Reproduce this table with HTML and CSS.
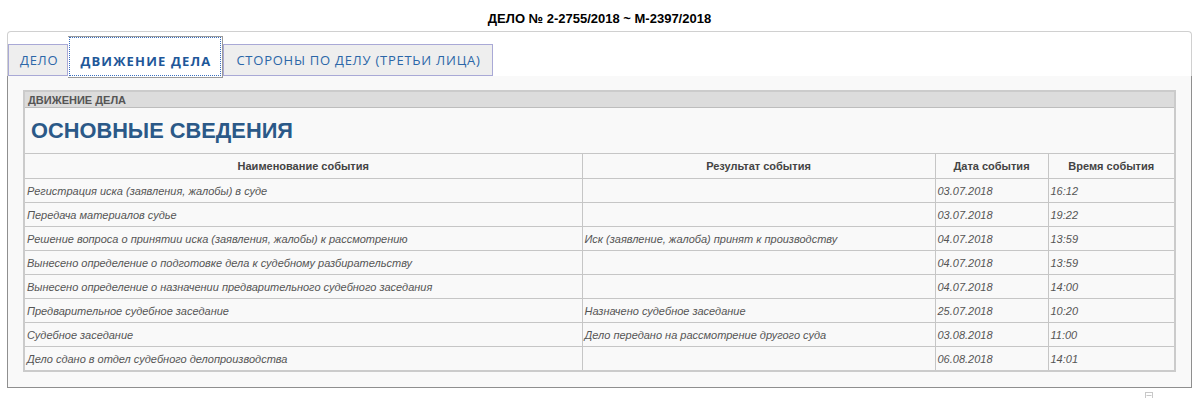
FILE: index.html
```html
<!DOCTYPE html>
<html lang="ru">
<head>
<meta charset="utf-8">
<title>Дело № 2-2755/2018</title>
<link rel="stylesheet" href="styles.css">
</head>
<body>
<div class="page">
  <h1 class="case-title">ДЕЛО № 2-2755/2018 ~ М-2397/2018</h1>
  <div class="tabs-box">
    <div class="tabs">
      <div class="tab tab-first">ДЕЛО</div>
      <div class="tab tab-active"><span class="focus">ДВИЖЕНИЕ ДЕЛА</span></div>
      <div class="tab">СТОРОНЫ ПО ДЕЛУ (ТРЕТЬИ ЛИЦА)</div>
    </div>
    <div class="panel">
      <table class="events">
        <colgroup>
          <col class="c1"><col class="c2"><col class="c3"><col class="c4">
        </colgroup>
        <tr class="sec"><td colspan="4">ДВИЖЕНИЕ ДЕЛА</td></tr>
        <tr class="big"><td colspan="4">ОСНОВНЫЕ СВЕДЕНИЯ</td></tr>
        <tr class="head">
          <th>Наименование события</th>
          <th>Результат события</th>
          <th>Дата события</th>
          <th>Время события</th>
        </tr>
        <tr><td>Регистрация иска (заявления, жалобы) в суде</td><td></td><td>03.07.2018</td><td>16:12</td></tr>
        <tr><td>Передача материалов судье</td><td></td><td>03.07.2018</td><td>19:22</td></tr>
        <tr><td>Решение вопроса о принятии иска (заявления, жалобы) к рассмотрению</td><td>Иск (заявление, жалоба) принят к производству</td><td>04.07.2018</td><td>13:59</td></tr>
        <tr><td>Вынесено определение о подготовке дела к судебному разбирательству</td><td></td><td>04.07.2018</td><td>13:59</td></tr>
        <tr><td>Вынесено определение о назначении предварительного судебного заседания</td><td></td><td>04.07.2018</td><td>14:00</td></tr>
        <tr><td>Предварительное судебное заседание</td><td>Назначено судебное заседание</td><td>25.07.2018</td><td>10:20</td></tr>
        <tr><td>Судебное заседание</td><td>Дело передано на рассмотрение другого суда</td><td>03.08.2018</td><td>11:00</td></tr>
        <tr><td>Дело сдано в отдел судебного делопроизводства</td><td></td><td>06.08.2018</td><td>14:01</td></tr>
      </table>
    </div>
  </div>
  <div class="footer">
    <svg class="print-icon" width="8" height="8" viewBox="0 0 8 8"><rect x="0.5" y="0.5" width="7" height="7" fill="#fff" stroke="#c8c8c8"/><line x1="1.5" y1="3.5" x2="6.5" y2="3.5" stroke="#c8c8c8"/></svg>
  </div>
</div>
</body>
</html>
```

FILE: styles.css
```css
html, body {
  margin: 0;
  padding: 0;
  background: #fff;
}
.page {
  padding: 0 8px 0 7px;
  font-family: "Liberation Sans", Arial, sans-serif;
}
.case-title {
  margin: 0;
  padding-top: 11px;
  height: 20px;
  line-height: 16px;
  font-size: 13px;
  font-weight: bold;
  text-align: center;
  color: #000;
}
.tabs-box {
  border: 1px solid #d0d0d0;
  border-bottom: none;
  border-radius: 4px 4px 0 0;
}
.tabs {
  display: flex;
  align-items: flex-end;
  padding-top: 4px;
  position: relative;
  z-index: 1;
}
.tab {
  height: 30px;
  line-height: 31px;
  padding: 0 11px 0 12px;
  border: 1px solid #a9a9d6;
  background: #eeeeee;
  font-family: "Open Sans", "Noto Sans", sans-serif;
  font-size: 13px;
  letter-spacing: 0.75px;
  color: #2b66a8;
}
.tab-first {
  padding: 0 9px 0 11px;
}
.tab + .tab {
  border-left: none;
}
.tab-active {
  height: 40px;
  margin-bottom: -2px;
  padding: 0 1px;
  border: 1px solid #9a9a9a;
  background: #fff;
  font-weight: bold;
  letter-spacing: 1.15px;
  color: #1e5799;
}
.tab-active + .tab {
  border-left: 1px solid #a9a9d6;
}
.tab-active .focus {
  display: block;
  height: 29px;
  padding: 8px 9px 0 10px;
  line-height: 31px;
  border: 1px dotted #3a6fc0;
}
.panel {
  margin-left: -1px;
  margin-right: -1px;
  border: 1px solid #8f8f8f;
  border-top: none;
  background: #f9f9f9;
  padding: 14px 16px 15px 15px;
}
.events {
  width: 100%;
  border-collapse: collapse;
  table-layout: fixed;
  border: 2px solid #cbcbcb;
  background: #f9f9f9;
}
.c1 { width: 558px; }
.c2 { width: 353px; }
.c3 { width: 113px; }
.c4 { width: 127px; }
.events td, .events th {
  border: 1px solid #c6c6c6;
  font-size: 11px;
  padding: 0 2px;
  white-space: nowrap;
  overflow: hidden;
}
.events td {
  height: 23px;
  font-style: italic;
  color: #555;
}
.events tr.sec td {
  height: 15px;
  background: #dcdcdc;
  border-bottom: 1px solid #bdbdbd;
  font-style: normal;
  font-weight: bold;
  color: #555;
  padding-left: 3px;
  line-height: 14px;
}
.events tr.big td {
  height: 44px;
  font-style: normal;
  font-weight: bold;
  font-size: 21.8px;
  color: #2b5988;
  padding-left: 6px;
  padding-top: 1px;
}
.events th {
  height: 24px;
  font-weight: bold;
  color: #444;
  text-align: center;
}
.footer {
  display: flex;
  justify-content: flex-end;
  padding: 4px 39px 0 0;
}
.print-icon {
  display: block;
}
```
